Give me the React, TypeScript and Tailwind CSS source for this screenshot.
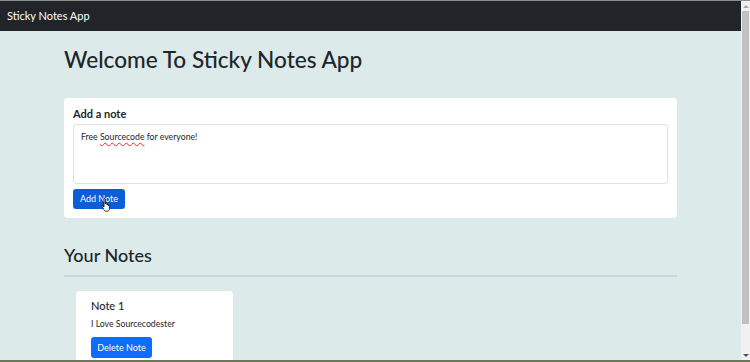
export default function App() {
  return (
    <div className="h-[362px] w-[750px] flex flex-col overflow-hidden font-['Lato',sans-serif] text-[#212529]">
      <div className="h-px bg-[#8c8c8c]" />
      <div className="flex flex-1 min-h-0">
        <div className="flex-1 flex flex-col bg-[#dceaea] overflow-hidden">
          <nav className="h-[30px] shrink-0 bg-[#212529] px-[7px] flex items-center text-[11px] text-white">
            Sticky Notes App
          </nav>
          <main className="w-[613px] mx-auto pt-[13px]">
            <h1 className="text-[22.6px] font-medium leading-[32px]">Welcome To Sticky Notes App</h1>
            <div className="mt-[22px] bg-white rounded-[4px] px-[9px] pt-[8px] pb-[9px]">
              <h5 className="text-[11px] font-bold leading-[16px]">Add a note</h5>
              <div className="mt-[2px] h-[60px] border border-[#dee2e6] rounded-[3px] px-[7px] py-[5px] text-[8.7px] leading-[14px]">
                Free{" "}
                <span className="underline decoration-wavy decoration-[#e03131] decoration-1 underline-offset-2">
                  Sourcecode
                </span>{" "}
                for everyone!
              </div>
              <div className="relative mt-[5px] w-[52px]">
                <button className="block h-[20px] w-[52px] rounded-[3px] bg-[#0b5ed7] text-white text-[9px]">
                  Add Note
                </button>
                <svg className="absolute left-[28px] top-[9px]" width="11" height="14" viewBox="0 0 11 14">
                  <path
                    d="M3 1.2c0-.7 1.3-.7 1.3 0V6l.3-1c.4-.6 1.3-.4 1.3.3V7c.2-.8 1.3-.8 1.3 0v1c.2-.7 1.3-.6 1.3.2v2.6c0 1.3-.8 2.4-2.2 2.4H5c-1 0-1.6-.6-2.2-1.6L1.1 8.3c-.3-.6.5-1.2 1-.6L3 9V1.2z"
                    fill="#fff"
                    stroke="#000"
                    strokeWidth="0.8"
                  />
                </svg>
              </div>
            </div>
            <h2 className="mt-[24px] text-[18px] font-medium leading-[26px]">Your Notes</h2>
            <div className="mt-[7px] h-[2px] bg-[#c7d7d7]" />
            <div className="mt-[14px] ml-[12px] w-[157px] bg-white rounded-[4px] px-[15px] pt-[7px] pb-[10px]">
              <h5 className="text-[11px] font-medium leading-[16px]">Note 1</h5>
              <p className="mt-[3px] text-[8.7px] leading-[14px]">I Love Sourcecodester</p>
              <button className="block mt-[6px] h-[21px] w-[61px] rounded-[3px] bg-[#0d6efd] text-white text-[9px]">
                Delete Note
              </button>
            </div>
          </main>
        </div>
        <div className="w-[9px] bg-[#f1f1f1] flex flex-col items-center">
          <div className="h-[10px] flex items-center justify-center">
            <div className="w-0 h-0 border-x-[3px] border-x-transparent border-b-[3px] border-b-[#a3a3a3]" />
          </div>
          <div className="w-[7px] flex-1 bg-[#c1c1c1] mb-[26px]" />
          <div className="h-[10px] flex items-center justify-center">
            <div className="w-0 h-0 border-x-[3px] border-x-transparent border-t-[3px] border-t-[#505050]" />
          </div>
        </div>
      </div>
      <div className="h-[2px] bg-[#6d7559]" />
    </div>
  )
}
